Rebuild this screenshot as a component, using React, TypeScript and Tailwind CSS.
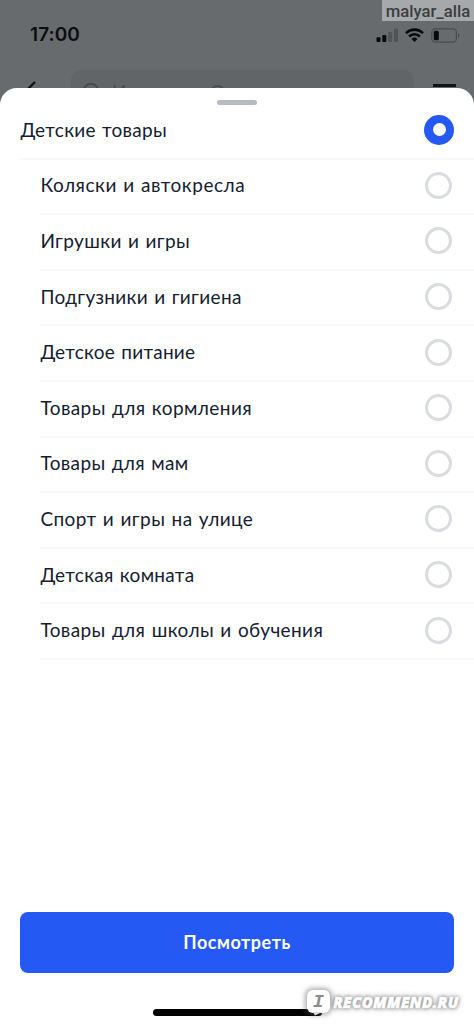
import React, { useState } from 'react'
import clsx from 'clsx'

type Category = { label: string; text: string; nested: boolean }

// `text` carries the tracking of each label
const CATEGORIES: Category[] = [
  { label: 'Детские товары', text: 'tracking-[0.3px] [word-spacing:1px]', nested: false },
  { label: 'Коляски и автокресла', text: 'tracking-[0.52px] [word-spacing:1px]', nested: true },
  { label: 'Игрушки и игры', text: 'tracking-[0.36px] [word-spacing:1px]', nested: true },
  { label: 'Подгузники и гигиена', text: 'tracking-[0.33px] [word-spacing:1px]', nested: true },
  { label: 'Детское питание', text: 'tracking-[0.27px] [word-spacing:1px]', nested: true },
  { label: 'Товары для кормления', text: 'tracking-[0.42px] [word-spacing:1px]', nested: true },
  { label: 'Товары для мам', text: 'tracking-[0.36px] [word-spacing:1px]', nested: true },
  { label: 'Спорт и игры на улице', text: 'tracking-[0.42px] [word-spacing:1px]', nested: true },
  { label: 'Детская комната', text: 'tracking-[0.3px] [word-spacing:1px]', nested: true },
  { label: 'Товары для школы и обучения', text: 'tracking-[0.4px] [word-spacing:1px]', nested: true },
]

function StatusBar(): React.ReactElement {
  return (
    <div className="flex h-[70px] shrink-0 items-center justify-between pl-[30px] pr-[14px]">
      <span className="font-['Inter',sans-serif] text-[19px] font-semibold tracking-[0.1px] text-[#0b0d10]">17:00</span>
      <div className="flex items-center gap-[7px]">
        <svg width="22" height="14" viewBox="0 0 22 14">
          <rect x="0.5" y="9.3" width="4" height="4.7" rx="1.2" fill="#08090a" />
          <rect x="6.3" y="7" width="4" height="7" rx="1.2" fill="#08090a" />
          <rect x="12.2" y="4" width="4" height="10" rx="1.2" fill="#505457" />
          <rect x="18" y="0.5" width="4" height="13.5" rx="1.2" fill="#505457" />
        </svg>
        <svg width="19" height="14" viewBox="0 0 19 14" fill="none" stroke="#08090a" strokeWidth="2.6">
          <path d="M1 5.1a12.2 12.2 0 0 1 17 0" />
          <path d="M4.1 8.5a7.7 7.7 0 0 1 10.8 0" />
          <path d="M9.5 14 6.6 11a4.2 4.2 0 0 1 5.8 0z" fill="#08090a" stroke="none" />
        </svg>
        <svg width="29" height="15" viewBox="0 0 29 15">
          <rect x="0.8" y="0.8" width="24.6" height="13.4" rx="3.6" fill="none" stroke="#484c4f" strokeWidth="1.2" />
          <rect x="2.8" y="2.8" width="5" height="9.4" rx="1.5" fill="#08090a" />
          <path d="M27 5.2c1.8.6 1.8 4 0 4.6z" fill="#484c4f" />
        </svg>
      </div>
    </div>
  )
}

// Page header behind the sheet, mostly covered by it
function DimmedHeader(): React.ReactElement {
  return (
    <div className="flex h-[50px] items-start pl-[24px] pr-[18px]">
      <svg className="mt-[11px]" width="14" height="22" viewBox="0 0 14 22" fill="none" stroke="#111315" strokeWidth="2.4">
        <path d="M11 1 2 10l9 9" />
      </svg>
      <div className="ml-[33px] flex h-[44px] w-[343px] items-start gap-[11px] rounded-[10px] bg-[#626567] pl-[12px] pt-[13px]">
        <svg className="shrink-0" width="18" height="18" viewBox="0 0 18 18" fill="none" stroke="#43474a" strokeWidth="1.6">
          <circle cx="8" cy="8" r="7.2" />
        </svg>
        <span className="-mt-px font-['Lato',sans-serif] text-[19px] leading-[20px] tracking-[0.5px] text-[#484c4f] [word-spacing:1px]">
          Искать на Ozon
        </span>
      </div>
      <div className="ml-auto mt-[14px] h-[3px] w-[23px] bg-[#111315]" />
    </div>
  )
}

function Radio({ checked }: { checked: boolean }): React.ReactElement {
  if (checked) {
    return (
      <span className="flex size-[30px] shrink-0 items-center justify-center rounded-full bg-[#2559f4]">
        <span className="size-[13px] rounded-full bg-white" />
      </span>
    )
  }
  return <span className="mr-[2px] block size-[27px] shrink-0 rounded-full border-[3px] border-[#dadcdf]" />
}

// White letter tile and wordmark with a grey halo
function Watermark(): React.ReactElement {
  return (
    <div className="absolute left-[307px] top-[990px] flex items-center">
      <div className="relative flex size-[23px] items-center justify-center rounded-[6px] bg-white shadow-[0_0_5px_2px_rgba(90,90,90,0.5)]">
        <span className="font-['Liberation_Mono',monospace] text-[18px] font-bold italic leading-none text-[#8b8b8b]">I</span>
        <svg className="absolute left-[6px] top-[22px]" width="10" height="4" viewBox="0 0 10 4">
          <path d="M0 0h9L2 3.5z" fill="#ddd" />
        </svg>
      </div>
      <span className="ml-[3px] font-['Open_Sans',sans-serif] text-[15px] font-extrabold italic leading-[22px] tracking-[0.35px] text-white [-webkit-text-stroke:0.5px_#fff] [text-shadow:0_0_3px_#8c8c8c,0_0_4px_#999,0_0_7px_#aaa]">
        RECOMMEND.RU
      </span>
    </div>
  )
}

export default function App(): React.ReactElement {
  const [selected, setSelected] = useState(0)

  return (
    <div className="relative flex h-[1026px] w-[474px] flex-col overflow-hidden bg-[#676b6e]">
      <StatusBar />
      <div className="h-[18px] shrink-0">
        <DimmedHeader />
      </div>

      <div className="relative flex flex-1 flex-col rounded-t-[17px] bg-white">
        <div className="mx-auto mt-[12px] h-[5px] w-[40px] shrink-0 rounded-full bg-[#b5bac3]" />
        <div className="-mt-px flex flex-col">
          {CATEGORIES.map((c, i) => (
            <div
              key={c.label}
              onClick={() => setSelected(i)}
              className={clsx(
                'flex h-[55.6px] items-center justify-between border-b-2 border-[#f6f7f8] pb-[2px] pr-[20px]',
                c.nested ? 'ml-[40px]' : 'ml-[20px]',
              )}
            >
              <span className={clsx("whitespace-nowrap pl-[0.4px] font-['Lato',sans-serif] text-[19px] leading-[24px] text-[#14202f]", c.text)}>
                {c.label}
              </span>
              <Radio checked={selected === i} />
            </div>
          ))}
        </div>

        <button className="mx-[20px] mb-[36px] mt-auto h-[61px] rounded-[8px] bg-[#2559f4] font-['Lato',sans-serif] text-[18px] font-bold tracking-[0.55px] text-white">
          Посмотреть
        </button>
        <div className="mx-auto mb-[10.5px] h-[6.5px] w-[169px] rounded-full bg-black" />
      </div>

      <div className="absolute right-0 top-0 flex h-[21px] w-[92px] items-center justify-center bg-[#a6a9ab] pt-[2px] font-['Roboto',sans-serif] text-[16.7px] font-medium text-[#3b3d3f]">
        malyar_alla
      </div>
      <Watermark />
    </div>
  )
}
